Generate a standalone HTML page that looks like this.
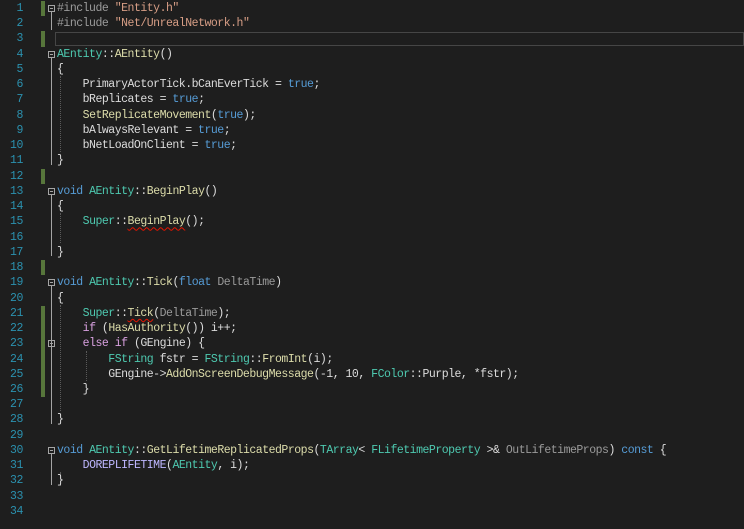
<!DOCTYPE html>
<html><head><meta charset="utf-8"><style>
body{margin:0;background:#1e1e1e;width:744px;height:529px;overflow:hidden;position:relative;font-family:"Liberation Mono",monospace;font-size:11.5px;}
.ln{position:absolute;left:0;width:23px;text-align:right;color:#2b91af;height:15.24px;line-height:15.24px;letter-spacing:-0.4px}
.c{position:absolute;left:57px;white-space:pre;color:#dcdcdc;height:15.24px;line-height:15.24px;letter-spacing:-0.49px}
.g{position:absolute;left:41px;width:4px;height:15.24px;background:#57763b}
.f{position:absolute;left:48px;width:7px;height:7px;border:1px solid #a5a5a5;box-sizing:border-box}
.f::after{content:"";position:absolute;left:1px;top:2px;width:3px;height:1px;background:#a5a5a5}
.v{position:absolute;left:51px;width:1px;background:#a5a5a5}
.d{position:absolute;width:0;border-left:1px dotted #5a5a5a}
.k{color:#569cd6}.t{color:#4ec9b0}.fn{color:#dcdcaa}.s{color:#d69d85}.p{color:#9b9b9b}.m{color:#beb7ff}.pa{color:#9a9a9a}.pu{color:#d8a0df}
.sq{text-decoration:underline wavy #e51400;text-decoration-thickness:1px;text-underline-offset:2px}
</style></head><body>
<div style="position:absolute;left:55px;top:31.5px;width:689px;height:14px;border:1px solid #464646;box-sizing:border-box"></div>
<div class="ln" style="top:1px">1</div><div class="ln" style="top:16.24px">2</div><div class="ln" style="top:31.48px">3</div><div class="ln" style="top:46.72px">4</div><div class="ln" style="top:61.96px">5</div><div class="ln" style="top:77.2px">6</div><div class="ln" style="top:92.44px">7</div><div class="ln" style="top:107.68px">8</div><div class="ln" style="top:122.92px">9</div><div class="ln" style="top:138.16px">10</div><div class="ln" style="top:153.4px">11</div><div class="ln" style="top:168.64px">12</div><div class="ln" style="top:183.88px">13</div><div class="ln" style="top:199.12px">14</div><div class="ln" style="top:214.36px">15</div><div class="ln" style="top:229.6px">16</div><div class="ln" style="top:244.84px">17</div><div class="ln" style="top:260.08px">18</div><div class="ln" style="top:275.32px">19</div><div class="ln" style="top:290.56px">20</div><div class="ln" style="top:305.8px">21</div><div class="ln" style="top:321.04px">22</div><div class="ln" style="top:336.28px">23</div><div class="ln" style="top:351.52px">24</div><div class="ln" style="top:366.76px">25</div><div class="ln" style="top:382px">26</div><div class="ln" style="top:397.24px">27</div><div class="ln" style="top:412.48px">28</div><div class="ln" style="top:427.72px">29</div><div class="ln" style="top:442.96px">30</div><div class="ln" style="top:458.2px">31</div><div class="ln" style="top:473.44px">32</div><div class="ln" style="top:488.68px">33</div><div class="ln" style="top:503.92px">34</div>

<div class="g" style="top:1px"></div><div class="g" style="top:31.48px"></div><div class="g" style="top:168.64px"></div><div class="g" style="top:260.08px"></div><div class="g" style="top:305.8px;height:91.44px"></div>

<div class="f" style="top:5px"></div><div class="v" style="top:12px;height:18px"></div>
<div class="f" style="top:51px"></div><div class="v" style="top:58px;height:107px"></div>
<div class="f" style="top:188px"></div><div class="v" style="top:195px;height:61px"></div>
<div class="f" style="top:279px"></div><div class="v" style="top:286px;height:138px"></div>
<div class="f" style="top:340px"></div>
<div class="f" style="top:447px"></div><div class="v" style="top:454px;height:31px"></div>
<div class="d" style="left:60px;top:76px;height:76px"></div>
<div class="d" style="left:60px;top:213px;height:30px"></div>
<div class="d" style="left:60px;top:305px;height:106px"></div>
<div class="d" style="left:86px;top:351px;height:30px"></div>
<div class="d" style="left:60px;top:472px;height:14px"></div>

<div class="c" style="top:1px"><span class="p">#include</span> <span class="s">"Entity.h"</span></div>
<div class="c" style="top:16.24px"><span class="p">#include</span> <span class="s">"Net/UnrealNetwork.h"</span></div>
<div class="c" style="top:46.72px"><span class="t">AEntity</span>::<span class="fn">AEntity</span>()</div>
<div class="c" style="top:61.96px">{</div>
<div class="c" style="top:77.2px">    PrimaryActorTick.bCanEverTick = <span class="k">true</span>;</div>
<div class="c" style="top:92.44px">    bReplicates = <span class="k">true</span>;</div>
<div class="c" style="top:107.68px">    <span class="fn">SetReplicateMovement</span>(<span class="k">true</span>);</div>
<div class="c" style="top:122.92px">    bAlwaysRelevant = <span class="k">true</span>;</div>
<div class="c" style="top:138.16px">    bNetLoadOnClient = <span class="k">true</span>;</div>
<div class="c" style="top:153.4px">}</div>
<div class="c" style="top:183.88px"><span class="k">void</span> <span class="t">AEntity</span>::<span class="fn">BeginPlay</span>()</div>
<div class="c" style="top:199.12px">{</div>
<div class="c" style="top:214.36px">    <span class="t">Super</span>::<span class="fn sq">BeginPlay</span>();</div>
<div class="c" style="top:244.84px">}</div>
<div class="c" style="top:275.32px"><span class="k">void</span> <span class="t">AEntity</span>::<span class="fn">Tick</span>(<span class="k">float</span> <span class="pa">DeltaTime</span>)</div>
<div class="c" style="top:290.56px">{</div>
<div class="c" style="top:305.8px">    <span class="t">Super</span>::<span class="fn sq">Tick</span>(<span class="pa">DeltaTime</span>);</div>
<div class="c" style="top:321.04px">    <span class="pu">if</span> (<span class="fn">HasAuthority</span>()) i++;</div>
<div class="c" style="top:336.28px">    <span class="pu">else if</span> (GEngine) {</div>
<div class="c" style="top:351.52px">        <span class="t">FString</span> fstr = <span class="t">FString</span>::<span class="fn">FromInt</span>(i);</div>
<div class="c" style="top:366.76px">        GEngine-&gt;<span class="fn">AddOnScreenDebugMessage</span>(-1, 10, <span class="t">FColor</span>::Purple, *fstr);</div>
<div class="c" style="top:382px">    }</div>
<div class="c" style="top:412.48px">}</div>
<div class="c" style="top:442.96px"><span class="k">void</span> <span class="t">AEntity</span>::<span class="fn">GetLifetimeReplicatedProps</span>(<span class="t">TArray</span>&lt; <span class="t">FLifetimeProperty</span> &gt;&amp; <span class="pa">OutLifetimeProps</span>) <span class="k">const</span> {</div>
<div class="c" style="top:458.2px">    <span class="m">DOREPLIFETIME</span>(<span class="t">AEntity</span>, i);</div>
<div class="c" style="top:473.44px">}</div>
</body></html>
